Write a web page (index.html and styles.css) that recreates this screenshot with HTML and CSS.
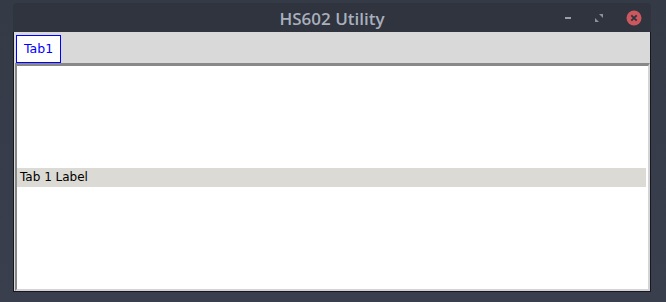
FILE: index.html
```html
<!DOCTYPE html>
<html lang="en">
<head>
    <meta charset="UTF-8">
    <title>HS602 Utility</title>
    <link rel="stylesheet" href="styles.css">
</head>
<body>
    <div class="window">
        <!-- Title bar -->
        <div class="titlebar">
            <span class="title">HS602 Utility</span>
            <div class="controls">
                <span class="btn-min"></span>
                <svg class="btn-max" width="8" height="8" viewBox="0 0 8 8">
                    <polygon points="4,0 8,0 8,4" fill="#8b919c"/>
                    <polygon points="0,4 0,8 4,8" fill="#8b919c"/>
                </svg>
                <svg class="btn-close" width="16" height="16" viewBox="0 0 16 16">
                    <circle cx="8" cy="8" r="7.5" fill="#cc575d"/>
                    <path d="M5.3 5.3 L10.7 10.7 M10.7 5.3 L5.3 10.7" stroke="#2f343f" stroke-width="1.8"/>
                </svg>
            </div>
        </div>

        <!-- Notebook -->
        <div class="content">
            <div class="tabs">
                <div class="tab">Tab1</div>
            </div>
            <div class="panel">
                <div class="label">Tab 1 Label</div>
            </div>
        </div>
    </div>
</body>
</html>
```

FILE: styles.css
```css
body {
    margin: 0;
    width: 666px;
    height: 302px;
    background: linear-gradient(180deg, #353a47 0%, #3a3f4e 100%);
    overflow: hidden;
}
.window {
    margin: 3px 0 0 13px;
    width: 638px;
    height: 289px;
    background-color: #2f343f;
    border-radius: 4px 4px 0 0;
    display: flex;
    flex-direction: column;
}
.titlebar {
    height: 29px;
    position: relative;
    display: flex;
    justify-content: center;
    align-items: center;
}
.title {
    font-family: "Open Sans", sans-serif;
    font-weight: 600;
    font-size: 17px;
    color: #a9b0bc;
    margin-top: 1px;
}
.controls {
    position: absolute;
    right: 9px;
    top: 7px;
    display: flex;
    align-items: center;
}
.btn-min {
    width: 6px;
    height: 2px;
    background-color: #9aa0aa;
    margin-right: 24px;
}
.btn-max {
    margin-right: 23px;
}
.content {
    flex: 1;
    background-color: #d9d9d9;
    border: 1px solid #16181d;
    border-top: none;
    display: flex;
    flex-direction: column;
}
.tabs {
    height: 31px;
    display: flex;
    align-items: flex-end;
    padding-left: 2px;
}
.tab {
    height: 26px;
    padding: 0 7px;
    border: 1px solid #0000ff;
    background-color: #fff;
    color: #0000ff;
    font-family: "DejaVu Sans", sans-serif;
    font-size: 12.5px;
    line-height: 26px;
}
.panel {
    flex: 1;
    margin-left: 1px;
    background-color: #fff;
    border-style: solid;
    border-width: 3px 2px 2px 2px;
    border-color: #888 #d4d4d4 #d4d4d4 #888;
    display: flex;
    align-items: center;
    padding-right: 2px;
}
.label {
    flex: 1;
    height: 19px;
    background-color: #dcdad5;
    padding-left: 3px;
    font-family: "DejaVu Sans", sans-serif;
    font-size: 12px;
    line-height: 19px;
    color: #000;
}
```
